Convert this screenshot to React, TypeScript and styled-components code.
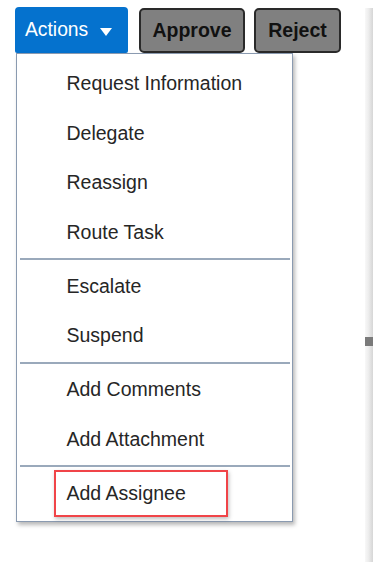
import React from "react";
import styled, { createGlobalStyle } from "styled-components";

const GlobalStyle = createGlobalStyle`
  html, body { margin: 0; padding: 0; background: #ffffff; }
  body { font-family: "Liberation Sans", Arial, sans-serif; }
`;

const Page = styled.div`
  display: flex;
  min-height: 562px;
  width: 373px;
  box-sizing: border-box;
`;

const Main = styled.div`
  flex: 1;
  padding: 7px 0 0 15px;
  display: flex;
  flex-direction: column;
  align-items: flex-start;
`;

const Toolbar = styled.div`
  display: flex;
  align-items: flex-start;
  height: 46px;
`;

const ActionsButton = styled.button`
  display: flex;
  align-items: center;
  gap: 12px;
  height: 46px;
  width: 113px;
  padding: 0 0 0 10px;
  border: none;
  border-radius: 4px 4px 2px 2px;
  background: #0572ce;
  color: #ffffff;
  font-family: "Liberation Sans", Arial, sans-serif;
  font-size: 19.3px;
  box-sizing: border-box;
`;

const Caret = styled.span`
  width: 0;
  height: 0;
  border-left: 6px solid transparent;
  border-right: 6px solid transparent;
  border-top: 8px solid #ffffff;
  margin-top: 3px;
`;

const GrayButton = styled.button<{ $w: number; $ml: number }>`
  height: 45px;
  width: ${(p) => p.$w}px;
  margin-left: ${(p) => p.$ml}px;
  margin-top: 1px;
  border: 2px solid #2a2a2a;
  border-radius: 5px;
  background: #808080;
  color: #111111;
  font-family: "Liberation Sans", Arial, sans-serif;
  font-weight: bold;
  font-size: 19.5px;
  padding: 0;
  box-sizing: border-box;
`;

const Menu = styled.div`
  width: 277px;
  margin-left: 0.5px;
  border: 1.5px solid #8a9ab0;
  background: #ffffff;
  box-shadow: 2px 3px 4px rgba(0, 0, 0, 0.28);
  padding: 5px 0 3px 0;
  box-sizing: border-box;
  display: flex;
  flex-direction: column;
`;

const Item = styled.div`
  height: 49.5px;
  display: flex;
  align-items: center;
  padding-left: 50px;
  font-size: 19.5px;
  color: #262626;
`;

const Divider = styled.div`
  height: 2px;
  margin: 1.2px 1.5px 1.3px 3px;
  background: #9aa9bb;
`;

const Highlight = styled.span`
  display: inline-flex;
  align-items: center;
  height: 47px;
  margin-left: -13px;
  padding: 0 40px 0 11px;
  border: 2.5px solid #f04448;
  box-shadow: 1px 2px 4px rgba(0, 0, 0, 0.25);
  box-sizing: border-box;
  margin-top: 1px;
`;

const Strip = styled.div`
  width: 8px;
  margin-top: 8px;
  background: linear-gradient(to right, #f8f8f8 0%, #eeeeee 40%, #d6d6d6 100%);
  display: flex;
  flex-direction: column;
  align-items: flex-end;
`;

const Thumb = styled.div`
  width: 8px;
  height: 9px;
  margin-top: 329px;
  background: #7a7a7a;
`;

const groups = [
  ["Request Information", "Delegate", "Reassign", "Route Task"],
  ["Escalate", "Suspend"],
  ["Add Comments", "Add Attachment"],
];

export default function App() {
  return (
    <>
      <GlobalStyle />
      <Page>
        <Main>
          <Toolbar>
            <ActionsButton>
              Actions <Caret />
            </ActionsButton>
            <GrayButton $w={106} $ml={11}>Approve</GrayButton>
            <GrayButton $w={87} $ml={9}>Reject</GrayButton>
          </Toolbar>
          <Menu>
            {groups.map((g, gi) => (
              <React.Fragment key={gi}>
                {g.map((label) => (
                  <Item key={label}>{label}</Item>
                ))}
                <Divider />
              </React.Fragment>
            ))}
            <Item>
              <Highlight>Add Assignee</Highlight>
            </Item>
          </Menu>
        </Main>
        <Strip>
          <Thumb />
        </Strip>
      </Page>
    </>
  );
}
